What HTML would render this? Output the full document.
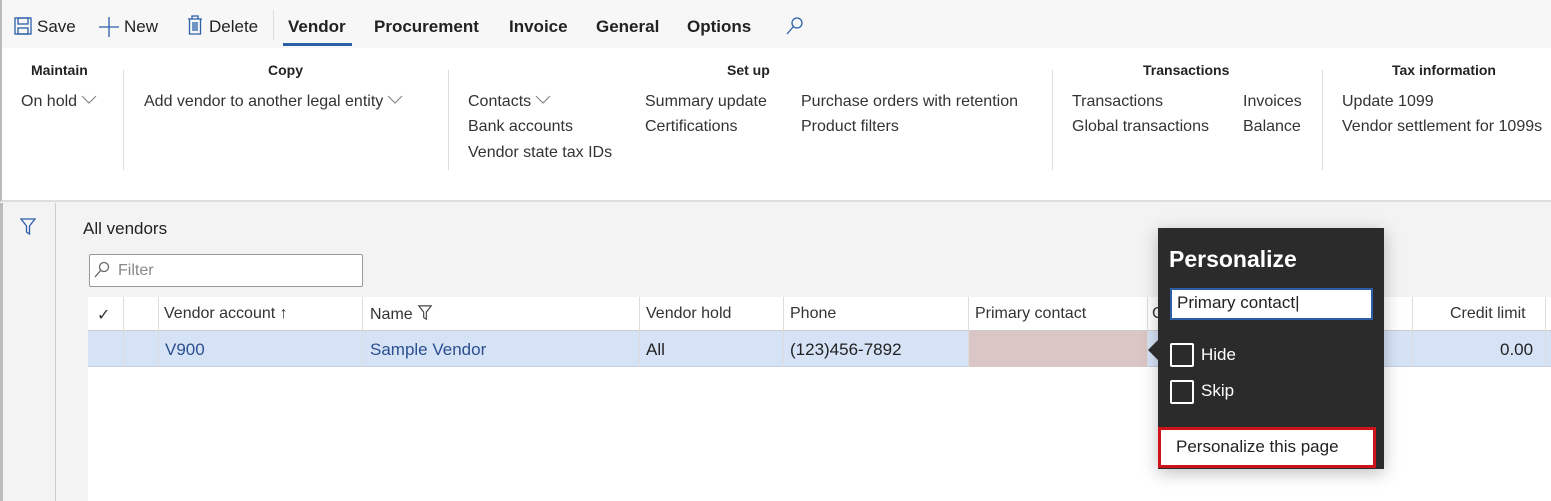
<!DOCTYPE html>
<html><head><style>
*{margin:0;padding:0;box-sizing:border-box}
body{width:1551px;height:501px;overflow:hidden;background:#f3f3f3;font-family:"Liberation Sans",sans-serif;font-size:16px;color:#222;position:relative}
.a{position:absolute;white-space:nowrap}
.top{left:0;top:0;width:1551px;height:48px;background:#f7f7f7;border-left:2px solid #bbb}
.rib{left:0;top:48px;width:1551px;height:154px;background:#fff;border-left:2px solid #bbb;border-bottom:2px solid #ddd}
.t{font-size:17px;top:17px}
.h{font-weight:bold;font-size:14px;top:62px}
.l{font-size:16px;color:#333;line-height:18px}
.sep{width:1px;background:#ddd}
.grid{left:88px;top:297px;width:1463px;height:204px;background:#fff}
.hd{top:305px;font-size:16px;color:#333}
.cl{top:297px;width:1px;height:70px;background:#ddd}
.cv{display:inline-block;vertical-align:2px;margin-left:4px}
</style></head><body>
<div class="a top"></div>
<div class="a rib"></div>
<svg class="a" style="left:13px;top:16px" width="20" height="20" viewBox="0 0 20 20" fill="none" stroke="#2b5fa8" stroke-width="1.3"><rect x="2" y="2" width="16" height="16"/><rect x="5" y="2" width="10" height="6"/><rect x="5" y="12" width="10" height="6"/></svg>
<div class="a t" style="left:37px">Save</div>
<svg class="a" style="left:98px;top:16px" width="22" height="22" viewBox="0 0 22 22" stroke="#2b5fa8" stroke-width="1.3"><path d="M11 1v20M1 11h20"/></svg>
<div class="a t" style="left:124px">New</div>
<svg class="a" style="left:186px;top:15px" width="18" height="20" viewBox="0 0 18 20" fill="none" stroke="#2b5fa8" stroke-width="1.3"><path d="M2 4h14M6 4V1h6v3M3.5 4v15h11V4M7 7v9M9 7v9M11 7v9"/></svg>
<div class="a t" style="left:209px">Delete</div>
<div class="a" style="left:273px;top:10px;width:1px;height:30px;background:#ddd"></div>
<div class="a t" style="left:288px;font-weight:bold">Vendor</div>
<div class="a" style="left:283px;top:43px;width:69px;height:3px;background:#2b5fa8"></div>
<div class="a t" style="left:374px;font-weight:bold;color:#222">Procurement</div>
<div class="a t" style="left:509px;font-weight:bold">Invoice</div>
<div class="a t" style="left:596px;font-weight:bold">General</div>
<div class="a t" style="left:687px;font-weight:bold">Options</div>
<svg class="a" style="left:785px;top:16px" width="20" height="20" viewBox="0 0 20 20" fill="none" stroke="#2b5fa8" stroke-width="1.3"><circle cx="12" cy="7" r="5"/><path d="M8.5 10.5L2 18"/></svg>

<div class="a h" style="left:31px">Maintain</div>
<div class="a h" style="left:268px">Copy</div>
<div class="a h" style="left:727px">Set up</div>
<div class="a h" style="left:1143px">Transactions</div>
<div class="a h" style="left:1392px">Tax information</div>
<div class="a l" style="left:21px;top:93px">On hold<svg class="cv" width="16" height="9" viewBox="0 0 16 9" fill="none" stroke="#888" stroke-width="1.2"><path d="M1 1l7 7 7-7"/></svg></div>
<div class="a l" style="left:144px;top:93px">Add vendor to another legal entity<svg class="cv" width="16" height="9" viewBox="0 0 16 9" fill="none" stroke="#888" stroke-width="1.2"><path d="M1 1l7 7 7-7"/></svg></div>
<div class="a l" style="left:468px;top:93px">Contacts<svg class="cv" width="16" height="9" viewBox="0 0 16 9" fill="none" stroke="#888" stroke-width="1.2"><path d="M1 1l7 7 7-7"/></svg></div>
<div class="a l" style="left:468px;top:118px">Bank accounts</div>
<div class="a l" style="left:468px;top:144px">Vendor state tax IDs</div>
<div class="a l" style="left:645px;top:93px">Summary update</div>
<div class="a l" style="left:645px;top:118px">Certifications</div>
<div class="a l" style="left:801px;top:93px">Purchase orders with retention</div>
<div class="a l" style="left:801px;top:118px">Product filters</div>
<div class="a l" style="left:1072px;top:93px">Transactions</div>
<div class="a l" style="left:1072px;top:118px">Global transactions</div>
<div class="a l" style="left:1243px;top:93px">Invoices</div>
<div class="a l" style="left:1243px;top:118px">Balance</div>
<div class="a l" style="left:1342px;top:93px">Update 1099</div>
<div class="a l" style="left:1342px;top:118px">Vendor settlement for 1099s</div>
<div class="a sep" style="left:123px;top:70px;height:100px"></div>
<div class="a sep" style="left:448px;top:70px;height:100px"></div>
<div class="a sep" style="left:1052px;top:70px;height:100px"></div>
<div class="a sep" style="left:1322px;top:70px;height:100px"></div>

<div class="a" style="left:0;top:203px;width:3px;height:298px;background:#bbb"></div>
<div class="a" style="left:55px;top:203px;width:1px;height:298px;background:#ccc"></div>
<svg class="a" style="left:20px;top:218px" width="16" height="18" viewBox="0 0 16 18" fill="none" stroke="#2b5fa8" stroke-width="1.3"><path d="M1 1h14L9.5 8v8L6.5 14V8z"/></svg>
<div class="a" style="left:83px;top:219px;font-size:17px">All vendors</div>
<div class="a" style="left:89px;top:254px;width:274px;height:33px;background:#fff;border:1px solid #999;border-radius:2px"></div>
<svg class="a" style="left:93px;top:261px" width="18" height="18" viewBox="0 0 18 18" fill="none" stroke="#666" stroke-width="1.3"><circle cx="11" cy="6" r="4.5"/><path d="M7.8 9.2L2 16"/></svg>
<div class="a" style="left:118px;top:262px;color:#888;font-size:16px">Filter</div>

<div class="a grid"></div>
<div class="a" style="left:88px;top:330px;width:1463px;height:1px;background:#ccc"></div>
<div class="a" style="left:88px;top:331px;width:1463px;height:36px;background:#d6e3f7;border-bottom:1px solid #c6cfe0"></div>
<div class="a" style="left:968px;top:331px;width:179px;height:36px;background:#dbc6c6"></div>
<div class="cl a" style="left:123px"></div><div class="cl a" style="left:158px"></div><div class="cl a" style="left:362px"></div><div class="cl a" style="left:639px"></div><div class="cl a" style="left:783px"></div><div class="cl a" style="left:968px"></div><div class="cl a" style="left:1147px"></div><div class="cl a" style="left:1412px"></div><div class="cl a" style="left:1545px"></div>
<div class="a hd" style="left:97px">✓</div>
<div class="a hd" style="left:164px">Vendor account ↑</div>
<div class="a hd" style="left:370px">Name <svg width="16" height="16" viewBox="0 0 16 18" fill="none" stroke="#444" stroke-width="1.3" style="vertical-align:-2px"><path d="M1 1h14L9.5 8v8L6.5 14V8z"/></svg></div>
<div class="a hd" style="left:646px">Vendor hold</div>
<div class="a hd" style="left:790px">Phone</div>
<div class="a hd" style="left:975px">Primary contact</div>
<div class="a hd" style="left:1152px">C</div>
<div class="a hd" style="left:1450px">Credit limit</div>
<div class="a" style="left:165px;top:340px;color:#2b4f8f;font-size:17px">V900</div>
<div class="a" style="left:370px;top:340px;color:#2b4f8f;font-size:17px">Sample Vendor</div>
<div class="a" style="left:646px;top:340px;font-size:17px">All</div>
<div class="a" style="left:790px;top:340px;font-size:17px">(123)456-7892</div>
<div class="a" style="left:1500px;top:340px;font-size:17px">0.00</div>

<div class="a" style="left:1158px;top:228px;width:226px;height:241px;background:#2b2b2b;box-shadow:0 4px 16px rgba(0,0,0,.25)"></div>
<div class="a" style="left:1148px;top:340px;width:0;height:0;border-top:10px solid transparent;border-bottom:10px solid transparent;border-right:10px solid #2b2b2b"></div>
<div class="a" style="left:1169px;top:246px;color:#fff;font-size:23px;font-weight:bold">Personalize</div>
<div class="a" style="left:1170px;top:288px;width:203px;height:32px;background:#fff;border:2px solid #2b5fa8"></div>
<div class="a" style="left:1177px;top:293px;font-size:17px;color:#222">Primary contact<span style="font-weight:100">|</span></div>
<div class="a" style="left:1170px;top:343px;width:24px;height:24px;border:2px solid #fff;border-radius:2px"></div>
<div class="a" style="left:1201px;top:345px;color:#fff;font-size:17px">Hide</div>
<div class="a" style="left:1170px;top:380px;width:24px;height:24px;border:2px solid #fff;border-radius:2px"></div>
<div class="a" style="left:1201px;top:381px;color:#fff;font-size:17px">Skip</div>
<div class="a" style="left:1158px;top:427px;width:218px;height:41px;background:#fff;border:3px solid #d0121b"></div>
<div class="a" style="left:1176px;top:437px;font-size:17px;color:#222">Personalize this page</div>
</body></html>
